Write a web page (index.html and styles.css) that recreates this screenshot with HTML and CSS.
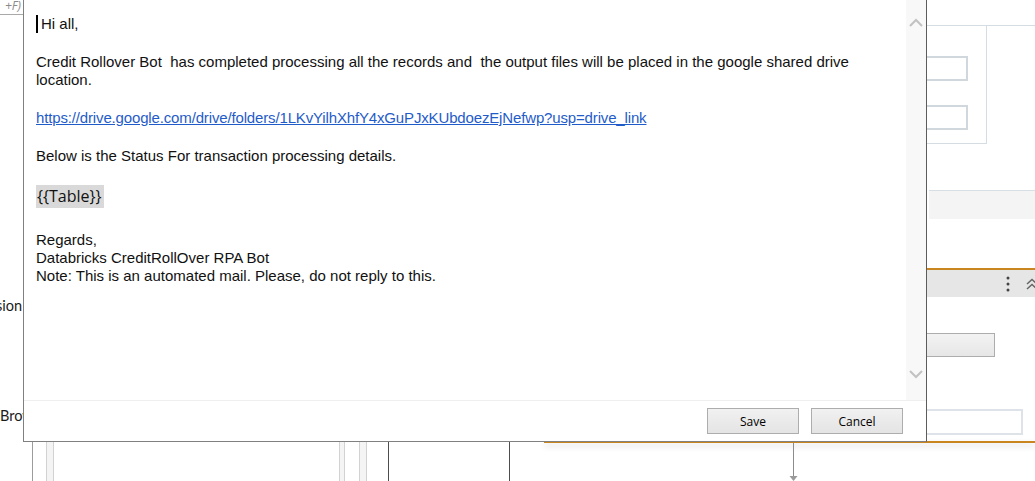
FILE: index.html
```html
<!DOCTYPE html>
<html lang="en">
<head>
    <meta charset="UTF-8">
    <title>Email Template</title>
    <link rel="stylesheet" href="styles.css">
</head>
<body>
    <div class="app">
        <div class="rail">
            <div class="hotkey">+F)</div>
            <div class="rail-label label-end"><span>Expression</span></div>
            <div class="rail-label label-start"><span>Browser</span></div>
        </div>

        <div class="canvas"></div>

        <div class="side">
            <div class="side-gap"></div>
            <div class="field-group">
                <div class="fields">
                    <div class="field"></div>
                    <div class="field field-next"></div>
                </div>
            </div>
            <div class="band"></div>
            <div class="panel-head">
                <svg class="kebab" width="4" height="16" viewBox="0 0 4 16">
                    <circle cx="2" cy="2" r="1.5" fill="#444"/>
                    <circle cx="2" cy="8" r="1.5" fill="#444"/>
                    <circle cx="2" cy="14" r="1.5" fill="#444"/>
                </svg>
                <svg class="collapse" width="12" height="12" viewBox="0 0 12 12">
                    <polyline points="1,6 6,1.5 11,6" fill="none" stroke="#666" stroke-width="1.5"/>
                    <polyline points="1,11 6,6.5 11,11" fill="none" stroke="#666" stroke-width="1.5"/>
                </svg>
            </div>
            <div class="panel-btn"></div>
            <div class="panel-input"></div>
        </div>

        <div class="lower">
            <div class="vline"></div>
            <div class="vpair pair-a"></div>
            <div class="vpair pair-b"></div>
            <div class="vpair pair-c"></div>
            <div class="vline dark line-d"></div>
            <div class="vline dark line-e"></div>
            <div class="panel-foot">
                <div class="panel-edge"></div>
                <svg class="connector" width="9" height="38" viewBox="0 0 9 38">
                    <line x1="4.5" y1="0" x2="4.5" y2="33" stroke="#8c8c8c" stroke-width="1"/>
                    <polygon points="0.5,33 8.5,33 4.5,38" fill="#9a9a9a"/>
                </svg>
            </div>
        </div>
    </div>

    <div class="dialog">
        <div class="editor">
            <div class="editor-body">
                <p class="first"><span class="caret"></span>Hi all,</p>
                <p>Credit Rollover Bot&nbsp; has completed processing all the records and&nbsp; the output files will be placed in the google shared drive location.</p>
                <p><a href="#">https://drive.google.com/drive/folders/1LKvYilhXhfY4xGuPJxKUbdoezEjNefwp?usp=drive_link</a></p>
                <p>Below is the Status For transaction processing details.</p>
                <p class="placeholder"><span class="mark">{{Table}}</span></p>
                <p>Regards,<br>Databricks CreditRollOver RPA Bot<br>Note: This is an automated mail. Please, do not reply to this.</p>
            </div>
            <div class="scrollbar">
                <svg width="14" height="9" viewBox="0 0 14 9">
                    <polyline points="1,8 7,2 13,8" fill="none" stroke="#c2c2c2" stroke-width="2"/>
                </svg>
                <svg width="14" height="9" viewBox="0 0 14 9">
                    <polyline points="1,1 7,7 13,1" fill="none" stroke="#c2c2c2" stroke-width="2"/>
                </svg>
            </div>
        </div>
        <div class="actions">
            <button class="btn">Save</button>
            <button class="btn">Cancel</button>
        </div>
    </div>
</body>
</html>
```

FILE: styles.css
```css
* {
    box-sizing: border-box;
}
body {
    margin: 0;
    width: 1035px;
    height: 481px;
    overflow: hidden;
    position: relative;
    background-color: #fff;
    font-family: "Open Sans", sans-serif;
}
.app {
    display: grid;
    grid-template-columns: 23px 904px 108px;
    grid-template-rows: 441px 40px;
}

/* left rail of the designer, mostly covered by the dialog */
.rail {
    display: flex;
    flex-direction: column;
    overflow: hidden;
}
.hotkey {
    height: 15px;
    border-bottom: 1px solid #a9a9a9;
    display: flex;
    justify-content: flex-end;
    align-items: flex-end;
    overflow: hidden;
    padding: 0 2px 2px 0;
    font-size: 12px;
    line-height: 12px;
    font-style: italic;
    color: #8a8a8a;
    white-space: nowrap;
}
.rail-label {
    display: flex;
    font-family: Lato, sans-serif;
    font-size: 14.5px;
    line-height: 20px;
    color: #1a1a1a;
    white-space: nowrap;
}
.label-end {
    justify-content: flex-end;
    margin-top: 281px;
    padding-right: 1px;
}
.label-start {
    margin-top: 90px;
}

/* right side panels */
.side {
    display: flex;
    flex-direction: column;
    overflow: hidden;
}
.side-gap {
    height: 25px;
}
.field-group {
    border-top: 1px solid #d6dde2;
}
.fields {
    width: 60px;
    height: 118px;
    padding-top: 30px;
    border-right: 1px solid #d6dde2;
    border-bottom: 1px solid #d6dde2;
}
.field {
    width: 41px;
    height: 25px;
    border: 2px solid #d0d8de;
    border-left: none;
}
.field-next {
    margin-top: 24px;
}
.band {
    margin-top: 46px;
    margin-left: 2px;
    height: 29px;
    border-top: 1px solid #d8dfe4;
    background-color: #f4f4f4;
}
.panel-head {
    margin-top: 49px;
    height: 29px;
    border-top: 2px solid #c9861f;
    background-color: #e6e6e7;
    display: flex;
    align-items: center;
    padding-left: 79px;
}
.kebab {
    flex-shrink: 0;
}
.collapse {
    margin-left: 16px;
    flex-shrink: 0;
}
.panel-btn {
    margin-top: 36px;
    width: 68px;
    height: 24px;
    border: 1px solid #adadad;
    border-left: none;
    background: linear-gradient(#f3f3f3, #e6e6e6);
}
.panel-input {
    margin-top: 52px;
    width: 96px;
    height: 26px;
    border: 2px solid #dde3e8;
    border-left: none;
}

/* lines running below the dialog */
.lower {
    grid-column: 1 / -1;
    display: flex;
    height: 40px;
}
.vline {
    width: 1px;
    margin-left: 32px;
    background-color: #9c9c9c;
}
.vpair {
    border-left: 1px solid #d2d2d2;
    border-right: 1px solid #d2d2d2;
    background-color: #f4f4f4;
}
.pair-a {
    margin-left: 13px;
    width: 8px;
}
.pair-b {
    margin-left: 285px;
    width: 6px;
}
.pair-c {
    margin-left: 14px;
    width: 8px;
}
.vline.dark {
    background-color: #4d4d4d;
}
.line-d {
    margin-left: 21px;
}
.line-e {
    margin-left: 120px;
}
.panel-foot {
    flex: 1;
    margin-left: 34px;
    display: flex;
    flex-direction: column;
}
.panel-edge {
    height: 2px;
    background-color: #c9861f;
    box-shadow: 0 3px 6px rgba(0, 0, 0, 0.18);
}
.connector {
    margin-left: 245px;
}

/* email template dialog */
.dialog {
    position: absolute;
    left: 23px;
    top: 0;
    width: 904px;
    height: 442px;
    background-color: #fff;
    border: 1px solid #808080;
    border-top: none;
    border-right-color: #5c5c5c;
    display: flex;
    flex-direction: column;
}
.editor {
    height: 401px;
    display: flex;
    border-bottom: 1px solid #efefef;
}
.editor-body {
    flex: 1;
    padding: 15px 30px 0 12px;
    font-family: "Liberation Sans", Arial, sans-serif;
    font-size: 15px;
    color: #111;
}
.editor-body p {
    margin: 0 0 20px;
    line-height: 18px;
}
.caret {
    display: inline-block;
    width: 2px;
    height: 18px;
    margin-right: 3px;
    vertical-align: top;
    background-color: #000;
}
.editor-body a {
    color: #1f5cc9;
    text-decoration: underline;
    letter-spacing: -0.15px;
}
.editor-body p.placeholder {
    line-height: 23px;
    margin-bottom: 23px;
}
.mark {
    display: inline-block;
    padding: 0 2px 0 1px;
    background-color: #d9d9d9;
    font-family: "Open Sans", sans-serif;
    font-size: 16px;
    color: #111;
}
.scrollbar {
    width: 20px;
    background-color: #f8f8f8;
    display: flex;
    flex-direction: column;
    justify-content: space-between;
    align-items: center;
    padding: 18px 0 21px;
}
.actions {
    flex: 1;
    display: flex;
    justify-content: flex-end;
    align-items: flex-start;
    gap: 12px;
    padding: 7px 23px 0 0;
}
.btn {
    width: 92px;
    height: 26px;
    border: 1px solid #adadad;
    background: linear-gradient(#f1f1f1, #e4e4e4);
    font-family: "Open Sans", sans-serif;
    font-size: 12px;
    color: #000;
    padding: 0;
}
```
